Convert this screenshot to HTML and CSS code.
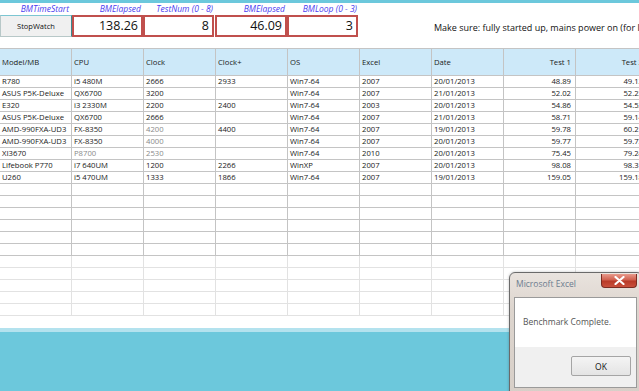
FILE: index.html
```html
<!DOCTYPE html>
<html>
<head>
<meta charset="utf-8">
<link rel="stylesheet" href="styles.css">
</head>
<body>
<div class="page">
  <div class="topbar"></div>
  <div class="labels">
    <div class="lbl">BMTimeStart</div>
    <div class="lbl">BMElapsed</div>
    <div class="lbl">TestNum (0 - 8)</div>
    <div class="lbl">BMElapsed</div>
    <div class="lbl">BMLoop (0 - 3)</div>
  </div>
  <div class="controls">
    <div class="btn">StopWatch</div>
    <div class="box b1">138.26</div>
    <div class="box b2">8</div>
    <div class="box b3">46.09</div>
    <div class="box b4">3</div>
    <div class="note">Make sure: fully started up, mains power on (for laptops)</div>
  </div>
  <div class="sheet">
    <div class="row head">
      <div class="c">Model/MB</div><div class="c">CPU</div><div class="c">Clock</div><div class="c">Clock+</div><div class="c">OS</div><div class="c">Excel</div><div class="c">Date</div><div class="c r">Test 1</div><div class="c r">Test 2</div>
    </div>
    <div class="row"><div class="c">R780</div><div class="c">i5 480M</div><div class="c">2666</div><div class="c">2933</div><div class="c">Win7-64</div><div class="c">2007</div><div class="c">20/01/2013</div><div class="c r">48.89</div><div class="c r">49.12</div></div>
    <div class="row"><div class="c">ASUS P5K-Deluxe</div><div class="c">QX6700</div><div class="c">3200</div><div class="c"></div><div class="c">Win7-64</div><div class="c">2007</div><div class="c">21/01/2013</div><div class="c r">52.02</div><div class="c r">52.23</div></div>
    <div class="row"><div class="c">E320</div><div class="c">i3 2330M</div><div class="c">2200</div><div class="c">2400</div><div class="c">Win7-64</div><div class="c">2003</div><div class="c">20/01/2013</div><div class="c r">54.86</div><div class="c r">54.52</div></div>
    <div class="row"><div class="c">ASUS P5K-Deluxe</div><div class="c">QX6700</div><div class="c">2666</div><div class="c"></div><div class="c">Win7-64</div><div class="c">2007</div><div class="c">21/01/2013</div><div class="c r">58.71</div><div class="c r">59.14</div></div>
    <div class="row"><div class="c">AMD-990FXA-UD3</div><div class="c">FX-8350</div><div class="c faint">4200</div><div class="c">4400</div><div class="c">Win7-64</div><div class="c">2007</div><div class="c">19/01/2013</div><div class="c r">59.78</div><div class="c r">60.21</div></div>
    <div class="row"><div class="c">AMD-990FXA-UD3</div><div class="c">FX-8350</div><div class="c faint">4000</div><div class="c"></div><div class="c">Win7-64</div><div class="c">2007</div><div class="c">20/01/2013</div><div class="c r">59.77</div><div class="c r">59.73</div></div>
    <div class="row"><div class="c">XI3670</div><div class="c faint">P8700</div><div class="c faint">2530</div><div class="c"></div><div class="c">Win7-64</div><div class="c">2010</div><div class="c">20/01/2013</div><div class="c r">75.45</div><div class="c r">79.24</div></div>
    <div class="row"><div class="c">Lifebook P770</div><div class="c">i7 640UM</div><div class="c">1200</div><div class="c">2266</div><div class="c">WinXP</div><div class="c">2007</div><div class="c">20/01/2013</div><div class="c r">98.08</div><div class="c r">98.31</div></div>
    <div class="row"><div class="c">U260</div><div class="c">i5 470UM</div><div class="c">1333</div><div class="c">1866</div><div class="c">Win7-64</div><div class="c">2007</div><div class="c">19/01/2013</div><div class="c r">159.05</div><div class="c r">159.18</div></div>
    <div class="row"><div class="c"></div><div class="c"></div><div class="c"></div><div class="c"></div><div class="c"></div><div class="c"></div><div class="c"></div><div class="c"></div><div class="c"></div></div>
    <div class="row"><div class="c"></div><div class="c"></div><div class="c"></div><div class="c"></div><div class="c"></div><div class="c"></div><div class="c"></div><div class="c"></div><div class="c"></div></div>
    <div class="row"><div class="c"></div><div class="c"></div><div class="c"></div><div class="c"></div><div class="c"></div><div class="c"></div><div class="c"></div><div class="c"></div><div class="c"></div></div>
    <div class="row"><div class="c"></div><div class="c"></div><div class="c"></div><div class="c"></div><div class="c"></div><div class="c"></div><div class="c"></div><div class="c"></div><div class="c"></div></div>
    <div class="row"><div class="c"></div><div class="c"></div><div class="c"></div><div class="c"></div><div class="c"></div><div class="c"></div><div class="c"></div><div class="c"></div><div class="c"></div></div>
    <div class="row"><div class="c"></div><div class="c"></div><div class="c"></div><div class="c"></div><div class="c"></div><div class="c"></div><div class="c"></div><div class="c"></div><div class="c"></div></div>
    <div class="row light"><div class="c"></div><div class="c"></div><div class="c"></div><div class="c"></div><div class="c"></div><div class="c"></div><div class="c"></div><div class="c"></div><div class="c"></div></div>
    <div class="row light"><div class="c"></div><div class="c"></div><div class="c"></div><div class="c"></div><div class="c"></div><div class="c"></div><div class="c"></div><div class="c"></div><div class="c"></div></div>
    <div class="row light"><div class="c"></div><div class="c"></div><div class="c"></div><div class="c"></div><div class="c"></div><div class="c"></div><div class="c"></div><div class="c"></div><div class="c"></div></div>
    <div class="row light"><div class="c"></div><div class="c"></div><div class="c"></div><div class="c"></div><div class="c"></div><div class="c"></div><div class="c"></div><div class="c"></div><div class="c"></div></div>
    <div class="row light"><div class="c"></div><div class="c"></div><div class="c"></div><div class="c"></div><div class="c"></div><div class="c"></div><div class="c"></div><div class="c"></div><div class="c"></div></div>
  </div>
  <div class="gap"></div>
  <div class="taskband"></div>
  <div class="taskbar"></div>

  <div class="dialog">
    <div class="dtitle">Microsoft Excel</div>
    <div class="dclose">
      <svg width="13" height="9" viewBox="0 0 13 9"><path d="M2.5 1 L10.5 8 M10.5 1 L2.5 8" stroke="#fff" stroke-width="2.2" stroke-linecap="round"/></svg>
    </div>
    <div class="dclient">
      <div class="dmsg">Benchmark Complete.</div>
      <div class="dfoot"><div class="okbtn">OK</div></div>
    </div>
  </div>
</div>
</body>
</html>
```
FILE: styles.css
```css
* { box-sizing: border-box; }
html, body { margin: 0; padding: 0; }
body {
  width: 639px;
  height: 391px;
  overflow: hidden;
  background: #ffffff;
  font-family: "Open Sans", "Liberation Sans", sans-serif;
}
.page {
  position: relative;
  width: 639px;
  height: 391px;
  overflow: hidden;
}
.topbar {
  height: 3px;
  background: #6cc8dc;
}
.labels {
  display: flex;
  height: 12px;
}
.lbl {
  width: 72px;
  flex: none;
  text-align: right;
  padding-right: 3px;
  font-style: italic;
  font-size: 8.5px;
  line-height: 12px;
  color: #4a3cf0;
  white-space: nowrap;
}
.controls {
  display: flex;
  height: 22px;
  white-space: nowrap;
}
.btn {
  width: 72px;
  flex: none;
  background: #f0f0f0;
  border: 1px solid #b8c8c8;
  border-top-color: #7cc6d2;
  border-right-color: #3a8a90;
  font-size: 7.5px;
  color: #111;
  display: flex;
  align-items: center;
  justify-content: center;
}
.box {
  flex: none;
  width: 71px;
  height: 22px;
  border: 2px solid #c0504d;
  font-size: 12.5px;
  color: #111;
  text-align: right;
  padding-right: 3px;
  line-height: 18px;
}
.b3 { margin-left: 1px; width: 72px; }
.note {
  margin-left: 76px;
  padding-top: 6px;
  font-size: 9px;
  color: #111;
}
.sheet {
  margin-top: 11px;
  width: 648px;
  border-top: 1px solid #c4c4c4;
}
.row {
  display: flex;
  height: 12px;
}
.row.head {
  height: 27px;
  background: #cde9f9;
}
.c {
  flex: none;
  width: 72px;
  height: 100%;
  border-right: 1px solid #c4c4c4;
  border-bottom: 1px solid #c4c4c4;
  font-size: 7.7px;
  line-height: 11px;
  color: #1a1a1a;
  padding-left: 2px;
  white-space: nowrap;
  overflow: hidden;
}
.head .c {
  line-height: 26px;
}
.c.r {
  text-align: right;
  padding-left: 0;
  padding-right: 4px;
}
.c.faint { color: #8a8a8a; }
.row.light .c {
  border-color: #e2e2e2;
}
.gap { height: 12px; }
.taskband {
  height: 4px;
  background: #b3e2ee;
}
.taskbar {
  height: 70px;
  background: #6cc8dc;
}
.dialog {
  position: absolute;
  left: 509px;
  top: 272px;
  width: 134px;
  height: 125px;
  border: 1px solid #6a6a6a;
  border-radius: 6px 6px 0 0;
  background: linear-gradient(180deg, #e9e3de 0%, #ddd5ce 30%, #d7cfc8 100%);
  box-shadow: 0 0 3px rgba(0,0,0,0.25);
}
.dtitle {
  height: 24px;
  padding-left: 6px;
  padding-top: 5px;
  font-size: 8.5px;
  color: #6c7c8e;
}
.dclose {
  position: absolute;
  left: 91px;
  top: 1px;
  width: 36px;
  height: 14px;
  border: 1px solid #7a2c22;
  border-top: none;
  border-radius: 0 0 4px 4px;
  background: linear-gradient(180deg, #e89a8c 0%, #d0604e 45%, #b83a28 55%, #c9503c 100%);
  display: flex;
  align-items: center;
  justify-content: center;
}
.dclient {
  margin-left: 4px;
  width: 123px;
  border: 1px solid #9a9a9a;
  background: #ffffff;
}
.dmsg {
  height: 49px;
  padding-left: 8px;
  padding-top: 18px;
  font-size: 8.5px;
  color: #555;
}
.dfoot {
  height: 40px;
  background: #f0f0f0;
  padding-top: 9px;
  padding-left: 56px;
}
.okbtn {
  width: 60px;
  height: 20px;
  border: 1px solid #a5a5a5;
  border-radius: 2px;
  background: linear-gradient(180deg, #f4f4f4 0%, #e4e4e4 100%);
  font-size: 8.5px;
  color: #111;
  display: flex;
  align-items: center;
  justify-content: center;
}
```
